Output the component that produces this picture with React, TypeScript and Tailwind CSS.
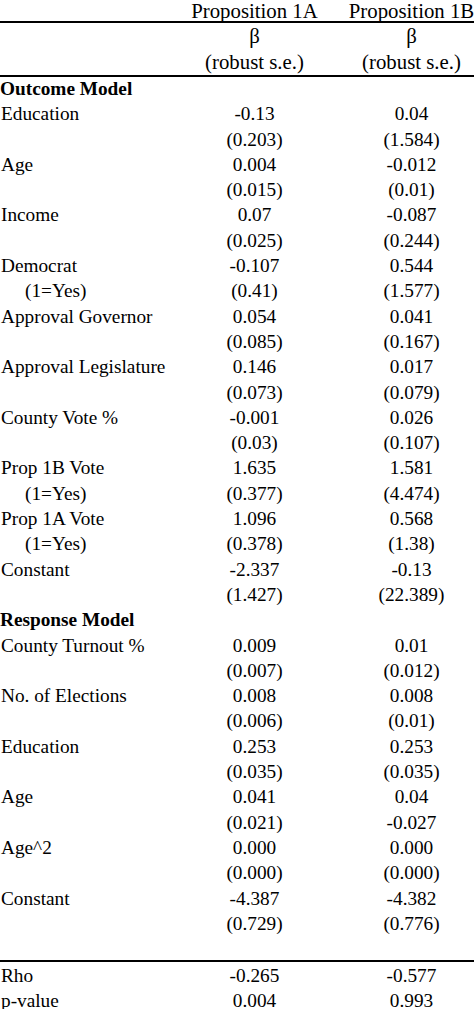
type Row = { label?: string; a?: string; b?: string; indent?: boolean; bold?: boolean };

const outcome: Row[] = [
  { label: 'Outcome Model', bold: true },
  { label: 'Education', a: '-0.13', b: '0.04' },
  { a: '(0.203)', b: '(1.584)' },
  { label: 'Age', a: '0.004', b: '-0.012' },
  { a: '(0.015)', b: '(0.01)' },
  { label: 'Income', a: '0.07', b: '-0.087' },
  { a: '(0.025)', b: '(0.244)' },
  { label: 'Democrat', a: '-0.107', b: '0.544' },
  { label: '(1=Yes)', indent: true, a: '(0.41)', b: '(1.577)' },
  { label: 'Approval Governor', a: '0.054', b: '0.041' },
  { a: '(0.085)', b: '(0.167)' },
  { label: 'Approval Legislature', a: '0.146', b: '0.017' },
  { a: '(0.073)', b: '(0.079)' },
  { label: 'County Vote %', a: '-0.001', b: '0.026' },
  { a: '(0.03)', b: '(0.107)' },
  { label: 'Prop 1B Vote', a: '1.635', b: '1.581' },
  { label: '(1=Yes)', indent: true, a: '(0.377)', b: '(4.474)' },
  { label: 'Prop 1A Vote', a: '1.096', b: '0.568' },
  { label: '(1=Yes)', indent: true, a: '(0.378)', b: '(1.38)' },
  { label: 'Constant', a: '-2.337', b: '-0.13' },
  { a: '(1.427)', b: '(22.389)' },
  { label: 'Response Model', bold: true },
  { label: 'County Turnout %', a: '0.009', b: '0.01' },
  { a: '(0.007)', b: '(0.012)' },
  { label: 'No. of Elections', a: '0.008', b: '0.008' },
  { a: '(0.006)', b: '(0.01)' },
  { label: 'Education', a: '0.253', b: '0.253' },
  { a: '(0.035)', b: '(0.035)' },
  { label: 'Age', a: '0.041', b: '0.04' },
  { a: '(0.021)', b: '-0.027' },
  { label: 'Age^2', a: '0.000', b: '0.000' },
  { a: '(0.000)', b: '(0.000)' },
  { label: 'Constant', a: '-4.387', b: '-4.382' },
  { a: '(0.729)', b: '(0.776)' },
];

const footer: Row[] = [
  { label: 'Rho', a: '-0.265', b: '-0.577' },
  { label: 'p-value', a: '0.004', b: '0.993' },
];

function TableRow({ row }: { row: Row }) {
  return (
    <div className="grid grid-cols-[176px_157px_157px] h-[25.3px] leading-[19px] whitespace-nowrap">
      <span className={row.indent ? 'pl-[25px]' : row.bold ? 'font-bold' : 'pl-px'}>{row.label}</span>
      <span className="text-center">{row.a}</span>
      <span className="text-center">{row.b}</span>
    </div>
  );
}

export default function App() {
  return (
    <div
      className="w-[474px] h-[1009px] overflow-hidden bg-white text-black"
      style={{ fontFamily: '"Liberation Serif", "Times New Roman", serif' }}
    >
      <div className="text-[20.8px] whitespace-nowrap">
        <div className="grid grid-cols-[176px_157px_157px] h-[21px] leading-[21px]">
          <span />
          <span className="text-center">Proposition 1A</span>
          <span className="text-center">Proposition 1B</span>
        </div>
        <div className="h-[2px] bg-black" />
        <div className="grid grid-cols-[176px_157px_157px] h-[26px] leading-[26px]">
          <span />
          <span className="text-center">β</span>
          <span className="text-center">β</span>
        </div>
        <div className="grid grid-cols-[176px_157px_157px] h-[26px] leading-[26px]">
          <span />
          <span className="text-center">(robust s.e.)</span>
          <span className="text-center">(robust s.e.)</span>
        </div>
        <div className="h-[2px] bg-black" />
      </div>

      <div className="text-[19.3px] pt-[2px]">
        {outcome.map((r, i) => (
          <TableRow key={i} row={r} />
        ))}
        <div className="h-[20.8px]" />
        <div className="h-[2px] bg-black" />
        <div className="pt-[4px]">
          {footer.map((r, i) => (
            <TableRow key={i} row={r} />
          ))}
        </div>
      </div>
    </div>
  );
}
